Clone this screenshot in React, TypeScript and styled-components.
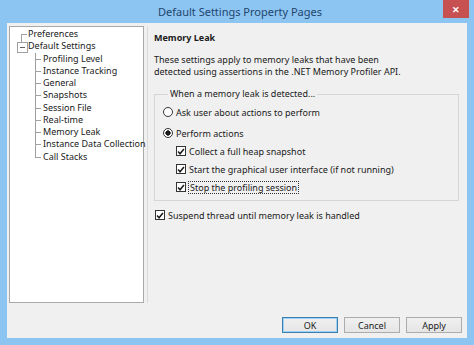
import { createGlobalStyle, styled } from "styled-components";

const GlobalStyle = createGlobalStyle`
  html, body {
    margin: 0;
    padding: 0;
    background: #8cc4f2;
  }
  * {
    box-sizing: border-box;
  }
`;

const treeChildren = [
  "Profiling Level",
  "Instance Tracking",
  "General",
  "Snapshots",
  "Session File",
  "Real-time",
  "Memory Leak",
  "Instance Data Collection",
  "Call Stacks",
];

const App = () => {
  return (
    <>
      <GlobalStyle />
      <Window>
        <TitleBar>
          <span />
          <Title>Default Settings Property Pages</Title>
          <CloseButton>✕</CloseButton>
        </TitleBar>
        <Client>
          <Body>
            <Tree>
              <RootItem $first>Preferences</RootItem>
              <RootItem $expander>Default Settings</RootItem>
              <Children>
                {treeChildren.map((name, i) => (
                  <ChildItem key={name} $last={i === treeChildren.length - 1}>
                    {name}
                  </ChildItem>
                ))}
              </Children>
            </Tree>
            <Page>
              <Heading>Memory Leak</Heading>
              <Description>
                These settings apply to memory leaks that have been
                <br />
                detected using assertions in the .NET Memory Profiler API.
              </Description>
              <Group>
                <Legend>When a memory leak is detected...</Legend>
                <Option>
                  <Radio />
                  Ask user about actions to perform
                </Option>
                <Option $gap={3}>
                  <Radio $checked />
                  Perform actions
                </Option>
                <Option $indent={13}>
                  <Check />
                  Collect a full heap snapshot
                </Option>
                <Option $indent={13}>
                  <Check />
                  Start the graphical user interface (if not running)
                </Option>
                <Option $indent={13}>
                  <Check />
                  <Focused>Stop the profiling session</Focused>
                </Option>
              </Group>
              <Option $gap={5} $indent={1}>
                <Check />
                Suspend thread until memory leak is handled
              </Option>
            </Page>
          </Body>
          <Footer>
            <Button $default>OK</Button>
            <Button>Cancel</Button>
            <Button>Apply</Button>
          </Footer>
        </Client>
      </Window>
    </>
  );
};

const CheckMark = () => (
  <svg width="9" height="9" viewBox="0 0 9 9">
    <path d="M1.2 4.6 L3.4 7 L7.8 1.6" fill="none" stroke="#1a1a1a" strokeWidth="1.7" />
  </svg>
);

const Check = () => (
  <CheckBox>
    <CheckMark />
  </CheckBox>
);

const Window = styled.div`
  width: 474px;
  height: 345px;
  display: flex;
  flex-direction: column;
  background: #8cc4f2;
  font-family: "Noto Sans", "Open Sans", sans-serif;
`;

const TitleBar = styled.div`
  height: 23px;
  display: grid;
  grid-template-columns: 1fr auto 1fr;
  align-items: start;
`;

const Title = styled.div`
  font-size: 11px;
  line-height: 24px;
  color: #23466e;
  padding-left: 6px;
`;

const CloseButton = styled.div`
  justify-self: end;
  width: 26px;
  height: 18px;
  margin-right: 5px;
  background: #c75050;
  color: #ffffff;
  font-size: 9px;
  font-weight: bold;
  display: flex;
  align-items: center;
  justify-content: center;
`;

const Client = styled.div`
  flex: 1;
  margin: 0 7px 7px 7px;
  background: #f0f0f0;
  display: flex;
  flex-direction: column;
  font-size: 9px;
  color: #1a1a1a;
`;

const Body = styled.div`
  flex: 1;
  display: flex;
  padding: 3px 0 0 2px;
`;

const Tree = styled.div`
  width: 135px;
  background: #ffffff;
  border: 1px solid #a9a9a9;
  padding-top: 1px;
`;

const RootItem = styled.div<{ $first?: boolean; $expander?: boolean }>`
  position: relative;
  height: 12.25px;
  line-height: 12.25px;
  padding-left: 18px;
  white-space: nowrap;

  &::before {
    content: "";
    position: absolute;
    left: 11px;
    top: 6px;
    width: 6px;
    border-top: 1px solid #a0a0a0;
  }

  ${({ $first }) =>
    $first &&
    `
    &::after {
      content: "";
      position: absolute;
      left: 11px;
      top: 6px;
      height: 8px;
      border-left: 1px solid #a0a0a0;
    }
  `}

  ${({ $expander }) =>
    $expander &&
    `
    &::after {
      content: "";
      position: absolute;
      left: 7px;
      top: 2px;
      width: 9px;
      height: 9px;
      background: #ffffff linear-gradient(#606060, #606060) center / 5px 1px no-repeat;
      border: 1px solid #a0a0a0;
    }
  `}
`;

const Children = styled.div`
  padding-left: 25px;
`;

const ChildItem = styled.div<{ $last?: boolean }>`
  position: relative;
  height: 12.25px;
  line-height: 12.25px;
  padding-left: 8px;
  white-space: nowrap;

  &::before {
    content: "";
    position: absolute;
    left: 0;
    top: 6px;
    width: 6px;
    border-top: 1px solid #a0a0a0;
  }

  &::after {
    content: "";
    position: absolute;
    left: 0;
    top: 0;
    height: ${({ $last }) => ($last ? "6px" : "100%")};
    border-left: 1px solid #a0a0a0;
  }
`;

const Page = styled.div`
  flex: 1;
  margin-left: 3px;
  border-left: 1px solid #dadada;
  padding: 6px 8px 0 6px;
`;

const Heading = styled.div`
  font-weight: bold;
  line-height: 12px;
`;

const Description = styled.div`
  margin-top: 10px;
  line-height: 12px;
`;

const Group = styled.fieldset`
  margin: 10px 0 0 0;
  padding: 3px 8px 4px 8px;
  border: 1px solid #d5d5d5;
  border-radius: 0;
`;

const Legend = styled.legend`
  padding: 0 2px;
  margin-left: 5px;
  line-height: 12px;
`;

const Option = styled.div<{ $gap?: number; $indent?: number }>`
  height: 18px;
  display: flex;
  align-items: center;
  gap: 3px;
  margin-top: ${({ $gap }) => $gap ?? 0}px;
  padding-left: ${({ $indent }) => $indent ?? 0}px;
  white-space: nowrap;
`;

const Radio = styled.span<{ $checked?: boolean }>`
  width: 10px;
  height: 10px;
  border-radius: 50%;
  border: 1px solid #333333;
  background: ${({ $checked }) =>
    $checked
      ? "radial-gradient(circle, #1a1a1a 0 2.4px, #ffffff 2.9px)"
      : "#ffffff"};
  flex-shrink: 0;
`;

const CheckBox = styled.span`
  width: 10px;
  height: 10px;
  border: 1px solid #333333;
  background: #ffffff;
  display: flex;
  align-items: center;
  justify-content: center;
  flex-shrink: 0;
`;

const Focused = styled.span`
  outline: 1px dotted #333333;
  padding: 0 1px;
  line-height: 11px;
`;

const Footer = styled.div`
  display: flex;
  justify-content: flex-end;
  gap: 6px;
  padding: 14px 5px 5px 0;
`;

const Button = styled.button<{ $default?: boolean }>`
  width: 56px;
  height: 16px;
  padding: 0;
  font-family: inherit;
  font-size: 9px;
  color: #1a1a1a;
  background: linear-gradient(#f0f0f0, #e5e5e5);
  border: 1px solid ${({ $default }) => ($default ? "#3c7fb1" : "#acacac")};
  box-shadow: ${({ $default }) => ($default ? "inset 0 0 0 1px #9fd0f5" : "none")};
`;

export default App;
